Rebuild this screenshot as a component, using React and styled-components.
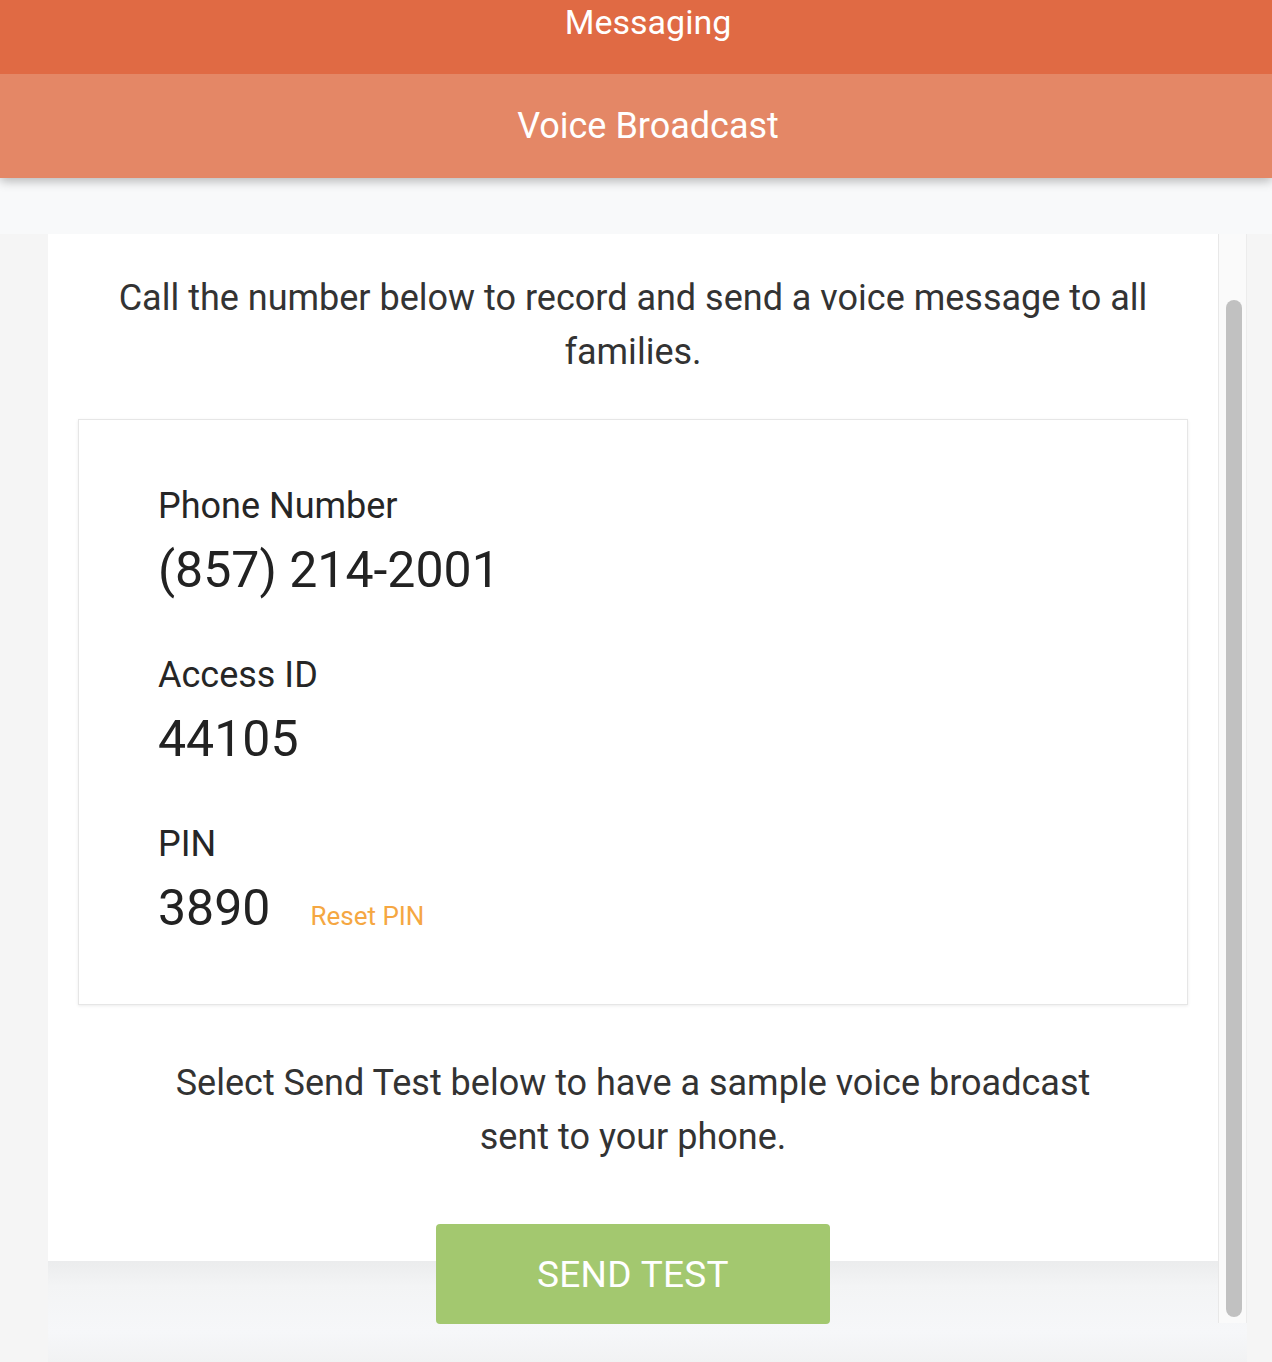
import styled, { createGlobalStyle } from "styled-components";

const GlobalStyle = createGlobalStyle`
  html, body {
    margin: 0;
    padding: 0;
    overflow: hidden;
    background: #f5f5f5;
    font-family: Roboto, "Open Sans", Arial, sans-serif;
  }
`;

const Page = styled.div`
  width: 100vw;
  height: 100vh;
  display: flex;
  flex-direction: column;
  background: #f5f5f5;
`;

const Header = styled.header`
  position: relative;
  z-index: 3;
  box-shadow: 0 3px 10px rgba(0, 0, 0, 0.28);
`;

const Bar = styled.div`
  box-sizing: border-box;
  height: ${(p) => p.$height}px;
  padding: ${(p) => p.$top}px 0 0 24px;
  background: ${(p) => p.$bg};
  color: #fff;
  font-size: ${(p) => p.$size}px;
  line-height: 40px;
  text-align: center;
`;

const Band = styled.div`
  height: 56px;
  background: #f8f9fa;
`;

const Body = styled.div`
  flex: 1;
  display: grid;
  grid-template-columns: 48px 1170px 29px 1fr;
  grid-template-rows: auto 1fr;
`;

const Panel = styled.main`
  grid-column: 2;
  grid-row: 1;
  background: #fff;
  padding: 37px 30px 0;
  display: flex;
  flex-direction: column;
  align-items: center;
`;

const Intro = styled.p`
  margin: 0;
  width: 100%;
  box-sizing: border-box;
  font-size: 36px;
  line-height: 54px;
  color: #333;
  text-align: center;
`;

const Card = styled.section`
  box-sizing: border-box;
  align-self: stretch;
  margin-top: 40px;
  height: 586px;
  padding: 65px 79px 0;
  border: 1px solid #e6e6e6;
  box-shadow: 0 1px 3px rgba(0, 0, 0, 0.08);
  display: flex;
  flex-direction: column;
  gap: 52px;
`;

const Field = styled.div`
  display: flex;
  flex-direction: column;
`;

const Label = styled.div`
  font-size: 36px;
  line-height: 42px;
  color: #262626;
  margin-bottom: 11px;
`;

const ValueRow = styled.div`
  display: flex;
  align-items: baseline;
  gap: 40px;
`;

const Value = styled.div`
  font-size: 50px;
  line-height: 64px;
  color: #222;
`;

const TextLink = styled.a`
  font-size: 26px;
  color: #f5a742;
  cursor: pointer;
`;

const Note = styled(Intro)`
  margin-top: 51px;
  padding: 0 60px;
`;

const SendButton = styled.button`
  position: relative;
  z-index: 2;
  margin: 60px 0 -63px;
  width: 394px;
  height: 100px;
  border: none;
  border-radius: 4px;
  background: #a3c86f;
  color: #fff;
  font-family: inherit;
  font-size: 37px;
  letter-spacing: 0.3px;
  cursor: pointer;
`;

const Footer = styled.div`
  grid-column: 2 / 4;
  grid-row: 2;
  background: linear-gradient(#ebeced 0%, #f3f4f5 25%, #f6f7f9 70%, #f1f2f3 100%);
`;

const Track = styled.div`
  grid-column: 3;
  grid-row: 1 / 3;
  align-self: start;
  z-index: 1;
  box-sizing: border-box;
  height: 1089px;
  background: #fafafa;
  border-left: 1px solid #e8e8e8;
  border-right: 1px solid #ececec;
  padding: 66px 4px 0 7px;
`;

const Thumb = styled.div`
  width: 16px;
  height: 1017px;
  border-radius: 8px;
  background: #c1c1c1;
`;

const fields = [
  { label: "Phone Number", value: "(857) 214-2001" },
  { label: "Access ID", value: "44105" },
  { label: "PIN", value: "3890", action: "Reset PIN" },
];

const App = () => {
  return (
    <Page>
      <GlobalStyle />
      <Header>
        <Bar $bg="#e06a44" $height={74} $top={2} $size={34}>Messaging</Bar>
        <Bar $bg="#e48766" $height={104} $top={32} $size={36}>Voice Broadcast</Bar>
      </Header>
      <Band />
      <Body>
        <Panel>
          <Intro>Call the number below to record and send a voice message to all families.</Intro>
          <Card>
            {fields.map((f) => (
              <Field key={f.label}>
                <Label>{f.label}</Label>
                <ValueRow>
                  <Value>{f.value}</Value>
                  {f.action && <TextLink>{f.action}</TextLink>}
                </ValueRow>
              </Field>
            ))}
          </Card>
          <Note>Select Send Test below to have a sample voice broadcast sent to your phone.</Note>
          <SendButton>SEND TEST</SendButton>
        </Panel>
        <Track>
          <Thumb />
        </Track>
        <Footer />
      </Body>
    </Page>
  );
};

export default App;
